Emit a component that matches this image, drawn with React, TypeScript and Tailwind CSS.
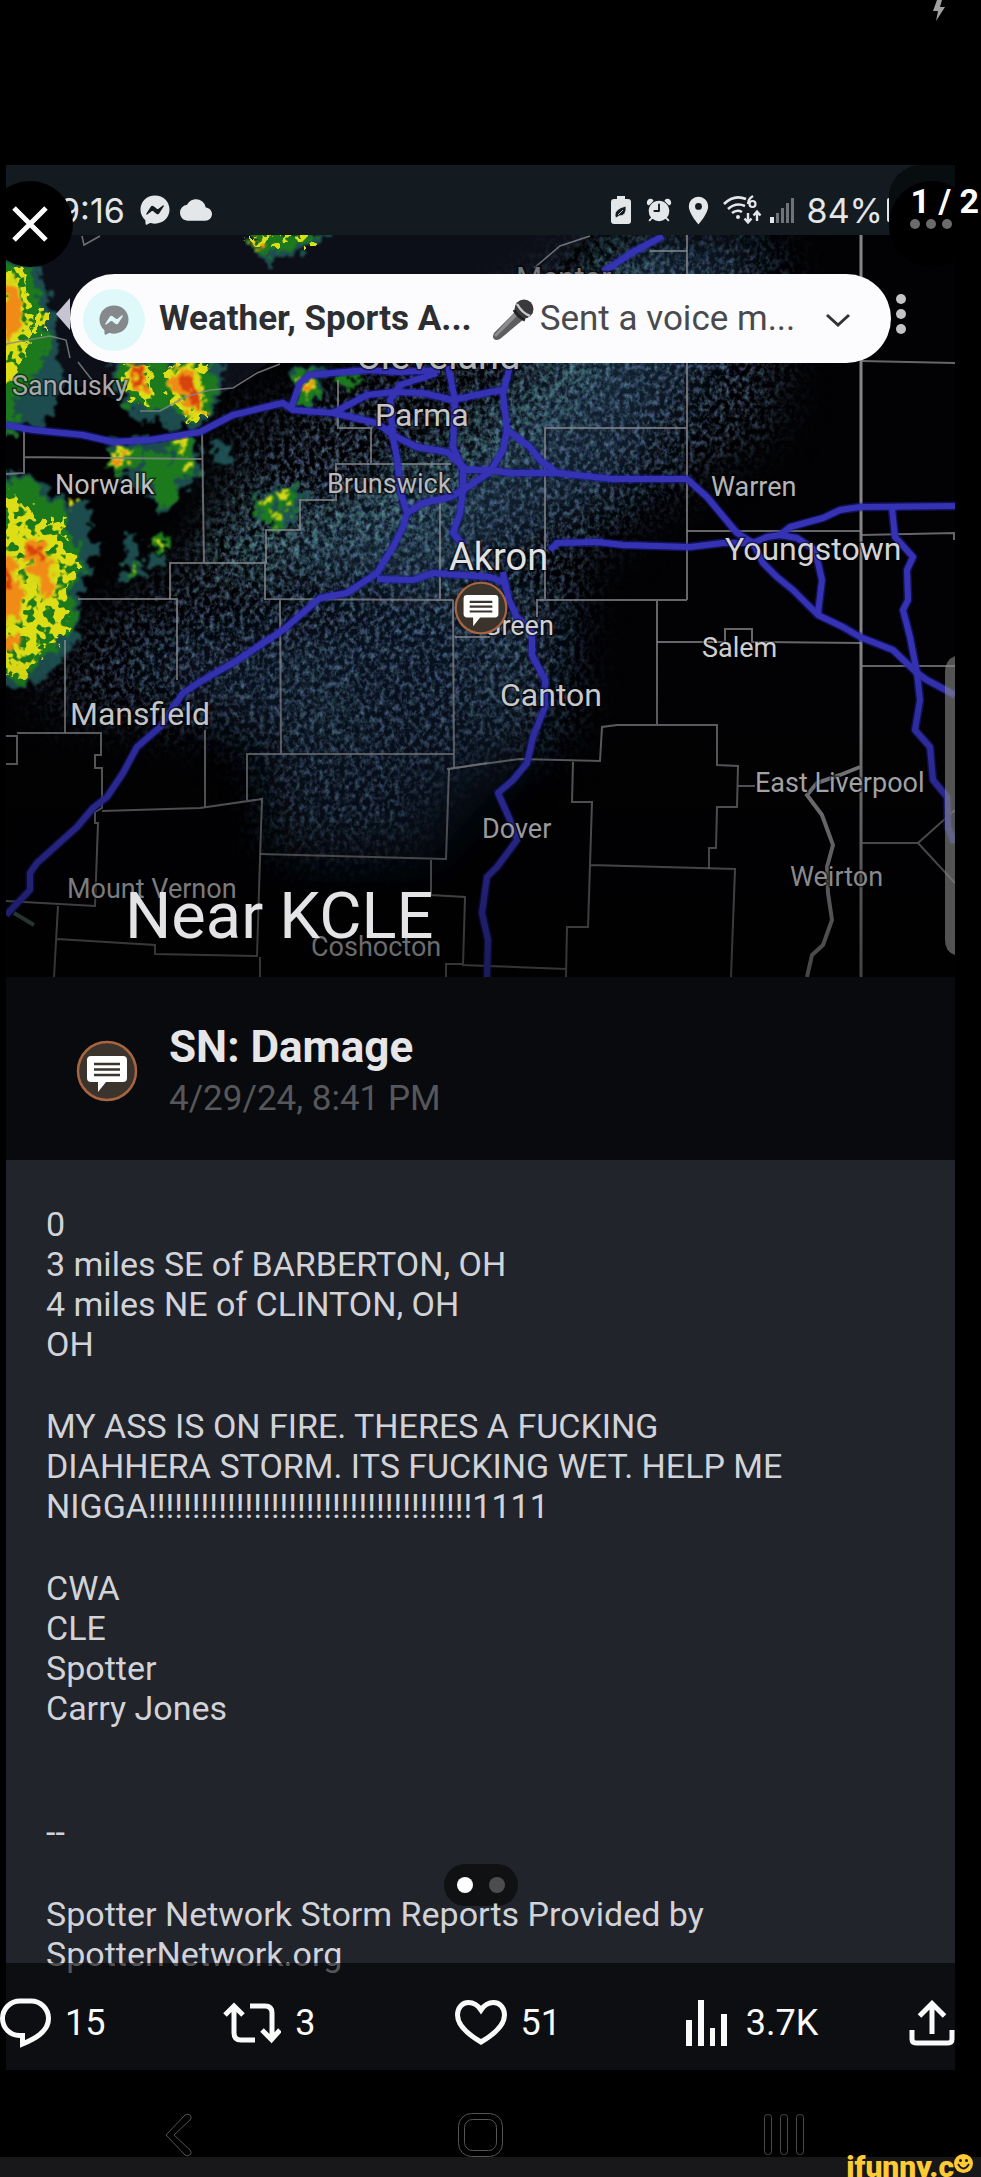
import type { ReactNode } from "react";
import { FaFacebookMessenger } from "react-icons/fa";
import { IoAlarm } from "react-icons/io5";
import { MdCloud, MdLocationOn } from "react-icons/md";

const ROADS = [
  "M6 425L33 430L83 435L113 442L150 440L200 432L233 415L283 403L293 410L333 413L377 423L393 435L417 447L447 452L467 470L490 470L510 473L557 473L613 479L687 479L707 497L737 533L753 543L763 563L777 577L793 590L818 615L843 627L860 637L893 650L917 673L927 680L955 695",
  "M557 473L540 460L530 447L507 430L503 393L510 366",
  "M507 430L503 450L490 472L463 490",
  "M333 413L367 395L393 392L423 393L453 400L490 392L505 390",
  "M393 435L390 400L400 385L437 373",
  "M291 408L300 383L310 375L367 370L400 372L440 370",
  "M448 366L455 400L453 447L463 470L463 490L460 513L453 533L463 545",
  "M390 425L397 457L400 490L407 513L403 527L393 547L377 573L347 593L320 598L283 630L233 663L203 680L183 693L160 727L137 747L123 773L107 797L93 808L77 827L37 863L30 873L30 890L6 915",
  "M407 513L423 503L450 497L463 490",
  "M377 579L413 580L433 573L490 577L505 583L509 600L517 617L532 632L532 655L545 680L545 707L533 737L527 763L513 780L498 793L510 820L517 840L497 867L487 877L482 913L488 940L487 977",
  "M503 572L506 590",
  "M550 550L557 543L597 542L623 545L690 547L723 543L753 543L767 537L780 535L790 527L823 518L840 510L860 507L955 506",
  "M780 535L797 538L815 550L822 580L818 613",
  "M892 508L895 537L913 557L907 570L908 600L903 610L910 637L917 673L920 700L915 730L930 747L933 780L947 797L948 827L954 843",
  "M603 272L633 252L663 236",
];

const COUNTIES = [
  "M687 235V600M545 428H687M545 428V600M657 600V724M537 617V600H687",
  "M687 531H860M862 535L954 533V540M657 642H725V629H752V642L861 643M861 666H955M650 251H687M862 361L955 363",
  "M447 769L490 763L520 759L600 761L602 727L617 725H717V765L738 766L737 807H717L716 848H709V869",
  "M573 762L572 802H592L590 865L588 927H567L566 977M590 865L735 869L731 977M487 966L566 969M738 786H755",
  "M862 843H918L955 810M918 843L955 883",
  "M24 430V473L6 474M24 457L203 459M202 430L204 563M170 599V563H266V530H300V500H336V464H451M371 464V428H338V380",
  "M265 564V599L453 600M78 599H177V680M280 600L281 753M440 500V600M453 600L454 768M65 640V733M455 637H490",
  "M6 736H17V764H6M17 733H101V755H95V768H102V808L95 812V823H98L95 906L6 901M205 730V807",
  "M102 811L200 808L262 799L259 890L257 956L155 954V945L57 939M58 906L54 977M247 800V754H454",
  "M260 854L446 859L449 769L487 763M431 860V895L465 897L463 965L487 966M446 977V964H463M260 957V977",
];

const LABELS = [
  { name: "Mentor", x: 516, y: 288, size: 30, fill: "#77777b" },
  { name: "Cleveland", x: 356, y: 369, size: 38, fill: "#b5b5b8" },
  { name: "Sandusky", x: 12, y: 395, size: 27, fill: "#a9a9ab" },
  { name: "Parma", x: 375, y: 426, size: 32, fill: "#c6c6c8" },
  { name: "Norwalk", x: 55, y: 494, size: 27, fill: "#c0c0c2" },
  { name: "Brunswick", x: 327, y: 493, size: 27, fill: "#b9b9bc" },
  { name: "Warren", x: 711, y: 496, size: 27, fill: "#b4b4b6" },
  { name: "Youngstown", x: 725, y: 560, size: 32, fill: "#d4d4d6" },
  { name: "Akron", x: 449, y: 570, size: 38, fill: "#e2e2e4" },
  { name: "Green", x: 483, y: 635, size: 27, fill: "#d0d0d2" },
  { name: "Salem", x: 702, y: 657, size: 27, fill: "#cfcfd1" },
  { name: "Canton", x: 500, y: 706, size: 32, fill: "#c9c9cb" },
  { name: "Mansfield", x: 70, y: 725, size: 32, fill: "#c4c4c6" },
  { name: "East Liverpool", x: 755, y: 792, size: 27, fill: "#a2a2a4" },
  { name: "Dover", x: 482, y: 838, size: 27, fill: "#9b9b9d" },
  { name: "Weirton", x: 790, y: 886, size: 27, fill: "#89898b" },
  { name: "Mount Vernon", x: 67, y: 898, size: 27, fill: "#7b7b7d" },
  { name: "Coshocton", x: 311, y: 956, size: 27, fill: "#6c6c6e" },
];

const REPORT = [
  ["0", "3 miles SE of BARBERTON, OH", "4 miles NE of CLINTON, OH", "OH"],
  [
    "MY ASS IS ON FIRE. THERES A FUCKING",
    "DIAHHERA STORM. ITS FUCKING WET. HELP ME",
    "NIGGA!!!!!!!!!!!!!!!!!!!!!!!!!!!!!!!!!!!!!1111",
  ],
  ["CWA", "CLE", "Spotter", "Carry Jones"],
  [],
  ["--"],
  ["Spotter Network Storm Reports Provided by", "SpotterNetwork.org"],
];

const ReportMarker = ({ className }: { className?: string }) => (
  <svg className={className} viewBox="0 0 62 62" aria-hidden="true">
    <circle cx="31" cy="31" r="29" fill="#3b342d" stroke="#a86540" strokeWidth="2.5" />
    <path
      d="M15 16h32q4 0 4 4v18q0 4-4 4H30l-8 10v-10h-7q-4 0-4-4V20q0-4 4-4z"
      fill="#fff"
    />
    <path d="M18 24h26M18 29.500h26M18 35h26" stroke="#3b342d" strokeWidth="2.500" />
  </svg>
);

const RadarMap = () => (
  <svg
    className="block w-full"
    viewBox="6 235 949 742"
    fontFamily="Roboto, sans-serif"
    role="img"
    aria-label="Radar map of northeast Ohio"
  >
    <defs>
      <filter id="speckle" x="0" y="0" width="100%" height="100%">
        <feTurbulence type="fractalNoise" baseFrequency="0.2 0.17" numOctaves="3" seed="4" />
        <feColorMatrix values="0 0 0 0 0.13  0 0.32 0 0 0.08  0 0 0.3 0 0.26  2.4 0 0 0 -0.98" />
      </filter>
      <filter id="teal" x="0" y="0" width="100%" height="100%">
        <feTurbulence type="fractalNoise" baseFrequency="0.16" numOctaves="3" seed="9" />
        <feColorMatrix values="0 0 0 0 0.14  0 0 0 0 0.45  0 0 0 0 0.43  3 0 0 0 -1.25" />
      </filter>
      <filter id="rough" x="-20%" y="-20%" width="140%" height="140%">
        <feTurbulence type="fractalNoise" baseFrequency="0.09" numOctaves="3" seed="2" />
        <feDisplacementMap in="SourceGraphic" scale="26" xChannelSelector="R" yChannelSelector="G" />
        <feGaussianBlur stdDeviation="0.8" />
      </filter>
      <filter id="patchy" x="-20%" y="-20%" width="140%" height="140%">
        <feTurbulence type="fractalNoise" baseFrequency="0.11" numOctaves="2" seed="7" result="noise" />
        <feDisplacementMap in="SourceGraphic" in2="noise" scale="24" xChannelSelector="R" yChannelSelector="G" result="cells" />
        <feColorMatrix in="noise" values="0 0 0 0 1  0 0 0 0 1  0 0 0 0 1  0 0 12 0 -4.8" />
        <feComposite in="cells" operator="in" />
        <feGaussianBlur stdDeviation="0.7" />
      </filter>
      <filter id="soft" x="-30%" y="-30%" width="160%" height="160%">
        <feGaussianBlur stdDeviation="24" />
      </filter>
      <mask id="field">
        <g filter="url(#soft)" fill="#fff">
          <path d="M160 590L260 470L340 380L500 310L600 240L780 240L780 420L660 500L580 560L570 740L450 760L400 850L270 850L260 740L120 720L30 700L100 620z" opacity=".7" />
          <path d="M220 400H360V520H220z" opacity=".4" />
        </g>
      </mask>
      <mask id="band">
        <g filter="url(#soft)" fill="none" stroke="#fff" strokeLinecap="round">
          <path d="M230 555L380 520L480 450L580 370L630 250" strokeWidth="42" opacity=".8" />
          <path d="M500 600L500 700M310 680L340 730M440 540V590M240 490V540" strokeWidth="40" opacity=".35" />
        </g>
      </mask>
      <linearGradient id="fade" x1="0" y1="0" x2="0" y2="1">
        <stop offset=".55" stopColor="#000" stopOpacity="0" />
        <stop offset="1" stopColor="#000" stopOpacity=".5" />
      </linearGradient>
    </defs>

    <rect x="6" y="235" width="949" height="742" fill="#020204" />
    <path d="M6 235H590L520 300L420 355L270 362L220 395L150 412L60 380L6 400z" fill="#0d0f18" />
    <path d="M120 662L420 590L560 600L540 740L430 860H290L260 740z" fill="#111d33" opacity=".6" filter="url(#soft)" />
    <path d="M240 560L480 450L640 240L760 250L640 470L430 600z" fill="#122b40" opacity=".7" filter="url(#soft)" />
    <g mask="url(#field)">
      <rect x="6" y="235" width="949" height="742" filter="url(#speckle)" />
    </g>
    <g mask="url(#band)">
      <rect x="6" y="235" width="949" height="742" filter="url(#teal)" />
    </g>

    {/* storm cells, weakest echo first */}
    <g filter="url(#rough)" fill="#245a5c" opacity=".85">
      <path d="M0 472L38 478L80 515L94 550L80 600L78 640L45 682L0 690z" />
      <path d="M0 255L36 262L56 320L62 380L50 420L0 440zM110 360H222L218 412L195 428L140 420L118 395z" />
      <path d="M108 442L150 440L198 440L202 475L180 495L165 515L145 490L118 475zM252 497L290 484L312 495L285 526L262 518zM244 232H330L300 254L264 262zM288 367L325 367L320 402L300 406z" />
      <path d="M125 535h14v30h-12zM85 542h16v16h-16zM212 442h20v18h-20zM150 552h14v14h-14zM120 565h24v14h-24zM72 500h18v24h-18z" />
    </g>
    <g filter="url(#rough)">
      <g fill="#1c7a1f">
        <path d="M0 478L34 482L68 515L74 545L84 560L74 592L76 628L44 660L24 684L0 676z" />
        <path d="M0 262L30 268L44 320L48 345L40 370L18 395L0 400zM0 398h16v36H0zM117 364H212L214 410L196 420L165 408L145 410L124 400z" />
        <path d="M110 448h28v24h-28zM172 440h24v38h-24zM140 450L165 448L180 500L160 508zM255 498h18v14h-18zM280 490h18v20h-18zM266 512h16v14h-16zM244 232h76L290 248L262 256zM294 370h24v32h-24zM152 536h16v12h-16zM126 565h12v12h-12zM335 375h22v10h-22z" />
      </g>
    </g>
    <g filter="url(#patchy)" fill="#dede18">
      <path d="M0 488L22 500L30 510L34 520L52 520L66 516L64 534L60 542L76 556L76 572L68 590L70 630L56 640L44 646L36 662L22 678L0 670z" />
      <path d="M0 268L22 270L28 300L32 330L20 370L0 390zM122 366L152 364L150 402L124 396zM164 366L207 364L196 390L208 418L186 418L168 396z" />
      <path d="M246 236h30v14h-20zM280 236h36v7h-36zM34 312h14v18h-14z" />
    </g>
    <g filter="url(#rough)">
      <g fill="#d8d818">
        <path d="M114 450h14v16h-14zM178 442h8v10h-8zM180 462h12v10h-12zM262 498h8v8h-8zM283 502h8v7h-8zM281 490h7v6h-7zM270 514h8v7h-8zM300 376h14v18h-14zM72 496h9v8h-9zM156 540h8v6h-8zM130 568h6v6h-6z" />
        <path d="M0 545L16 552L26 590L20 625L0 630zM26 538H50L60 590L44 604L30 580zM128 364H148V396H130zM172 366H200L206 414H192L172 390zM0 276L18 280L24 320L8 352L0 340z" />
      </g>
      <g fill="#ef8b14">
        <path d="M26 540L48 538L50 562L48 574L56 592L44 600L36 572L28 562zM0 556L14 562L22 592L16 620L0 614zM4 634h14v14h-14z" />
        <path d="M4 280L16 285L22 318L10 345L0 330zM130 364L146 364L146 398L132 396zM174 366L196 370L188 384L206 414L194 414L174 392z" />
        <path d="M116 454h9v10h-9zM302 380h10v12h-10zM256 240h7v8h-7z" />
      </g>
      <path d="M133 366h11v22h-11zM178 374h12l12 30l-8 4zM32 548h12v8h-12zM2 570h10v20h-10z" fill="#d7420f" />
    </g>

    <g fill="none" stroke="#87888c" strokeWidth="2">
      <path
        d="M140 411L160 411L185 397L210 390L233 388L257 373L280 364M534 268L560 246L590 236M6 344L50 336L66 340L70 358M78 362L92 380M82 236L84 245L100 236"
        strokeWidth="1.500"
        opacity=".8"
      />
      {COUNTIES.map((d) => (
        <path key={d} d={d} opacity=".75" />
      ))}
    </g>
    <path d="M861 235V977" stroke="#858588" strokeWidth="3" />
    <path
      d="M860 767L840 775L817 783L807 795L822 815L833 845L827 867L828 893L832 920L823 945L812 955L807 977"
      fill="none"
      stroke="#8b8b8e"
      strokeWidth="4"
    />
    <g fill="none" strokeLinejoin="round">
      {ROADS.map((d) => (
        <path key={d} d={d} stroke="#2020a8" strokeWidth="9" opacity=".5" />
      ))}
      {ROADS.map((d) => (
        <path key={d} d={d} stroke="#3533b4" strokeWidth="6" />
      ))}
    </g>
    <rect x="6" y="235" width="949" height="742" fill="url(#fade)" />
    <path d="M14 913L34 925" stroke="#26352f" strokeWidth="4" />

    {LABELS.map(({ name, x, y, size, fill }) => (
      <text
        key={name}
        x={x}
        y={y}
        fontSize={size}
        fill={fill}
        stroke="#000"
        strokeWidth="3"
        strokeOpacity=".5"
        paintOrder="stroke"
      >
        {name}
      </text>
    ))}
    <text x="125" y="938" fontSize="65" fill="#e4e4e6">
      Near KCLE
    </text>
    <svg x="454" y="581" width="54" height="54">
      <ReportMarker />
    </svg>
    <path d="M70 298L56 314L70 330z" fill="#c9c4d2" />
    <path d="M955 656Q945 660 945 672V940Q945 952 955 955z" fill="#8b8b8b" fillOpacity=".6" />
  </svg>
);

const MicIcon = () => (
  <svg className="w-[42px] h-[42px] shrink-0" viewBox="0 0 42 42" aria-hidden="true">
    <path d="M24 12L32 20L8 40Q4 42 2 40Q0 38 2 34z" fill="#5d5d5f" />
    <path d="M24 12L27 15L4 38L2 36z" fill="#8d8d90" />
    <circle cx="32" cy="10" r="9.500" fill="#3a3a3c" />
    <path d="M25 5Q30 14 38 17" stroke="#c9c9cc" strokeWidth="2.500" fill="none" />
    <path d="M22 11Q26 18 33 21" stroke="#222" strokeWidth="3" fill="none" />
  </svg>
);

const StatusBar = () => (
  <div className="flex h-[70px] items-center bg-[#131a20] pt-5 pl-[53px] font-[Inter,sans-serif] text-[34px] text-[#e3e7ea]">
    <span>9:16</span>
    <FaFacebookMessenger className="ml-[15px] size-[30px]" />
    <MdCloud className="ml-[10px] size-[32px]" />
    <div className="ml-auto flex items-center pr-[60px]">
      <svg className="h-[28px] w-[20px]" viewBox="0 0 20 28" aria-hidden="true">
        <path d="M6 0h8v3h3q3 0 3 3v19q0 3-3 3H3q-3 0-3-3V6q0-3 3-3h3z" fill="currentColor" />
        <path d="M15 10Q16 20 8 20L5 22L4 20Q3 13 15 10zM7 19L12 14" fill="#131a20" stroke="#e3e7ea" strokeWidth=".8" />
      </svg>
      <IoAlarm className="ml-[13px] size-[30px]" />
      <MdLocationOn className="ml-2 size-[33px]" />
      <svg className="ml-[8px] h-[30px] w-[40px]" viewBox="0 0 40 30" fill="none" stroke="currentColor" aria-hidden="true">
        <path d="M1 9Q11-1 23 4M5 14Q13 7 22 11M9 18Q14 14 19 17" strokeWidth="2.600" />
        <circle cx="15" cy="22" r="2" fill="currentColor" stroke="none" />
        <path d="M30 1Q25 4 25 9M29.500 6a3 3 0 1 1 0 6a3 3 0 0 1 0-6" strokeWidth="2.200" />
        <path d="M25 18v9M21.500 23.500L25 27.500L28.500 23.500M34 26V17M30.500 20.500L34 16.500L37.500 20.500" strokeWidth="2.400" />
      </svg>
      <svg className="ml-[7px] h-[26px] w-[25px]" viewBox="0 0 25 26" aria-hidden="true">
        <path d="M0 20h4v6H0z" fill="#e3e7ea" />
        <path d="M6 16h3v10H6zM11 11h3v15h-3zM16 6h3v20h-3zM21 1h3v25h-3z" fill="#6d7377" />
      </svg>
      <span className="ml-[12px]">84%</span>
      <span className="ml-1 h-6 w-2 rounded-xs bg-current" />
    </div>
  </div>
);

const ChatNotification = () => (
  <div className="absolute top-[109px] right-[64px] left-[64px] flex h-[89px] items-center rounded-full bg-[#fcfcfe] pt-[2px] pr-[40px] pl-[13px] text-[35px] whitespace-nowrap text-[#4a4a4d]">
    <span className="flex size-[62px] shrink-0 items-center justify-center rounded-full bg-[#dff8fa]">
      <FaFacebookMessenger className="size-[30px] text-[#85898c]" />
    </span>
    <strong className="ml-[14px] font-bold text-[#2d2e31]">Weather, Sports A...</strong>
    <span className="ml-5 flex items-center gap-[6px]">
      <MicIcon />
      Sent a voice m...
    </span>
    <button type="button" aria-label="Expand notification" className="ml-auto">
      <svg className="h-[14px] w-[26px]" viewBox="0 0 26 14" fill="none" stroke="#333" strokeWidth="3" aria-hidden="true">
        <path d="M2 2L13 12L24 2" />
      </svg>
    </button>
  </div>
);

const Action = ({ label, count, children }: { label: string; count?: string; children: ReactNode }) => (
  <button type="button" aria-label={label} className="flex items-center gap-[14px] text-[36px] leading-10">
    {children}
    {count && <span>{count}</span>}
  </button>
);

const ActionBar = () => (
  <footer className="relative -mt-[11px] h-[107px] bg-black/60 text-[#fafafa]">
    <div className="-ml-[6px] grid h-full grid-cols-[1fr_1fr_1fr_1fr_46px] items-center pt-3">
      <Action label="Reply" count="15">
        <svg className="h-[50px] w-[51px]" viewBox="0 0 51 50" fill="none" stroke="currentColor" strokeWidth="5" aria-hidden="true">
          <path d="M20 3h11a17.500 17.500 0 0 1 17.500 17.500C48.500 34 34 41 22.500 46V37.500h-3A17 17 0 0 1 2.500 20.500A17.500 17.500 0 0 1 20 3z" />
        </svg>
      </Action>
      <Action label="Repost" count="3">
        <svg className="-ml-1 h-[42px] w-[58px]" viewBox="0 0 58 42" fill="none" stroke="currentColor" strokeWidth="5" aria-hidden="true">
          <path d="M2 13L11 4L20 13M11 5V31Q11 38 18 38H32M27 4H42Q49 4 49 11V37M39 28L48.500 37.500L57 28" />
        </svg>
      </Action>
      <Action label="Like" count="51">
        <svg className="h-[45px] w-[52px]" viewBox="0 0 52 45" fill="none" stroke="currentColor" strokeWidth="5" aria-hidden="true">
          <path d="M26 10C22 4 17 2.500 13.500 2.500C7 2.500 2.500 8 2.500 15C2.500 26 14 35 26 42C38 35 49.500 26 49.500 15C49.500 8 45 2.500 38.500 2.500C35 2.500 30 4 26 10z" />
        </svg>
      </Action>
      <Action label="Views" count="3.7K">
        <svg className="mx-1 h-[46px] w-[42px]" viewBox="0 0 42 46" fill="currentColor" aria-hidden="true">
          <path d="M0 20h6v26H0zM12 0h6v46h-6zM24 28h5v18h-5zM35 14h6v32h-6z" />
        </svg>
      </Action>
      <Action label="Share">
        <svg className="h-[46px] w-[46px]" viewBox="0 0 46 46" fill="none" stroke="currentColor" strokeWidth="5" aria-hidden="true">
          <path d="M23 34V4M10.500 16L23 3.500L35.500 16M3 30V39Q3 43 7 43H39Q43 43 43 39V30" />
        </svg>
      </Action>
    </div>
  </footer>
);

const SystemNav = () => (
  <nav className="flex h-[87px] items-end justify-between pr-[177px] pl-[165px]">
    <button type="button" aria-label="Back">
      <svg className="h-[44px] w-[27px]" viewBox="0 0 27 44" fill="none" stroke="#555" aria-hidden="true">
        <path d="M20 2Q23 0 25.500 2.500Q27 5 25 7L9 22L25 37Q27 39.500 25.500 41.500Q23 44 20 42L1 22z" />
      </svg>
    </button>
    <button type="button" aria-label="Home">
      <svg className="ml-1 h-[44px] w-[45px]" viewBox="0 0 45 44" fill="none" stroke="#555" aria-hidden="true">
        <rect x=".5" y=".5" width="44" height="43" rx="13" />
        <rect x="6.500" y="6.500" width="32" height="31" rx="8" />
      </svg>
    </button>
    <button type="button" aria-label="Recent apps">
      <svg className="h-[43px] w-[40px]" viewBox="0 0 40 43" fill="none" stroke="#4a4a4a" aria-hidden="true">
        <rect x=".5" y=".5" width="7" height="40" rx="3" />
        <rect x="16.500" y=".5" width="7" height="40" rx="3" />
        <rect x="32.500" y=".5" width="7" height="40" rx="3" />
      </svg>
    </button>
  </nav>
);

const Watermark = () => (
  <div className="flex h-5 items-start justify-end bg-[#18181a] pr-2 text-[30px] leading-5 font-black text-[#ffcb34]">
    <span>ifunny.c</span>
    <svg className="-mt-[3px] size-[19px]" viewBox="0 0 19 19" aria-hidden="true">
      <circle cx="9.500" cy="9.500" r="9.500" fill="#ffcb34" />
      <path d="M4 10Q9.500 19 15 10" stroke="#18181a" strokeWidth="1.800" fill="none" />
      <circle cx="6.500" cy="6.500" r="1.500" fill="#18181a" />
      <circle cx="12.500" cy="6.500" r="1.500" fill="#18181a" />
    </svg>
  </div>
);

export default function App() {
  return (
    <div className="relative min-h-screen overflow-hidden bg-black font-[Roboto,sans-serif]">
      <header className="flex h-[165px] items-start justify-end pr-9">
        <svg className="h-[21px] w-[12px]" viewBox="0 0 12 21" aria-hidden="true">
          <path d="M4 0H9L7 7H12L3 21L5 11H0z" fill="#a0a0a0" />
        </svg>
      </header>

      <main className="relative mr-[26px] ml-[6px] bg-[#21242b]">
        <StatusBar />
        <RadarMap />
        <ChatNotification />

        <div className="absolute top-[129px] right-[49px] flex flex-col gap-[5px]">
          <i className="size-[10px] rounded-full bg-[#c4c4c6]" />
          <i className="size-[10px] rounded-full bg-[#c4c4c6]" />
          <i className="size-[10px] rounded-full bg-[#c4c4c6]" />
        </div>
        <button
          type="button"
          aria-label="Close"
          className="absolute top-[16px] -left-[19px] flex size-[86px] items-center justify-center rounded-full bg-black"
        >
          <svg className="size-[36px]" viewBox="0 0 36 36" stroke="#fff" strokeWidth="5" aria-hidden="true">
            <path d="M2 2L34 34M34 2L2 34" />
          </svg>
        </button>
        <div className="absolute top-0 -right-[26px] h-[70px] w-[92px] rounded-tl-[32px] bg-[#080d0f]" />
        <div className="absolute top-[16px] -right-[20px] size-[86px] rounded-full bg-black" />
        <div className="absolute top-0 -right-[26px] h-[70px] w-[26px] bg-black" />
        <div className="absolute top-[16px] -right-[24px] text-[34px] leading-[40px] font-bold text-white">1 / 2</div>
        <div className="absolute top-[54px] right-[3px] flex gap-[6px]">
          <i className="size-[10px] rounded-full bg-[#6b6b6b]" />
          <i className="size-[10px] rounded-full bg-[#6b6b6b]" />
          <i className="size-[10px] rounded-full bg-[#6b6b6b]" />
        </div>

        <section className="flex h-[183px] items-center gap-[31px] bg-[#090a0d] pt-1 pl-[70px]">
          <ReportMarker className="size-[62px]" />
          <div className="pt-1">
            <h1 className="text-[44px] leading-[52px] font-bold text-[#e6e6e8]">SN: Damage</h1>
            <p className="text-[35px] leading-[52px] text-[#56575b]">4/29/24, 8:41 PM</p>
          </div>
        </section>

        <section className="relative flex flex-col gap-[42px] pt-[44px] pl-[40px] text-[34px] leading-10 text-[#d2d3d8]">
          <div className="absolute bottom-[68px] left-1/2 flex h-[42px] w-[74px] -translate-x-1/2 items-center justify-center gap-4 rounded-full bg-[#0f1113]">
            <i className="size-4 rounded-full bg-white" />
            <i className="size-4 rounded-full bg-[#4d4d4f]" />
          </div>
          {REPORT.map((lines, i) => (
            <div key={i} className="relative">
              {lines.map((line) => (
                <p key={line}>{line}</p>
              ))}
            </div>
          ))}
        </section>
        <ActionBar />
      </main>

      <SystemNav />
      <Watermark />
    </div>
  );
}
